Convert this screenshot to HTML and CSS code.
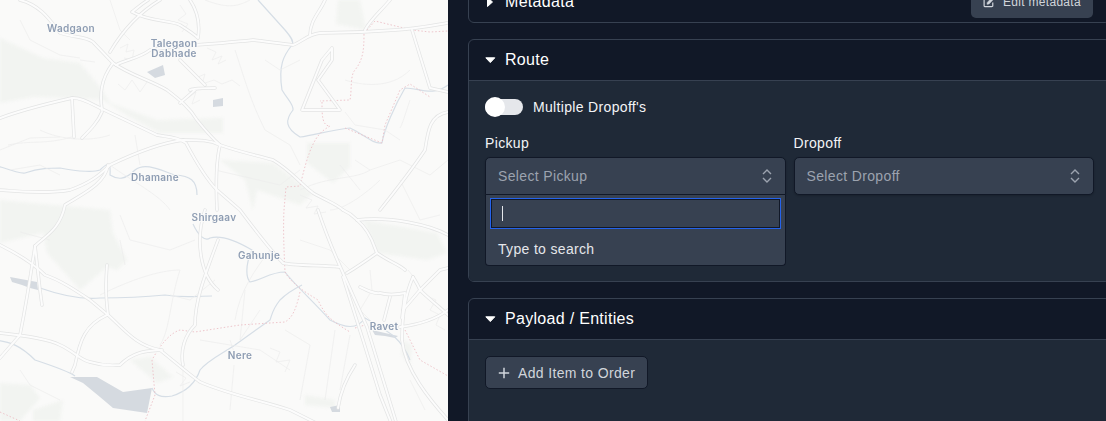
FILE: index.html
```html
<!DOCTYPE html>
<html lang="en">
<head>
<meta charset="utf-8">
<title>New Order</title>
<link rel="stylesheet" href="styles.css">
</head>
<body>
<div class="app">
  <div class="map">
    <svg class="map-svg" viewBox="0 0 448 421" width="448" height="421" aria-hidden="true">
      <defs>
        <g id="majors">
          <path d="M-5 120C20 110 50 103 72 98 80 97 90 103 100 108L157 135C168 137 178 137 186 143 195 160 205 178 217 190L240 210C255 230 270 250 283 263 295 266 320 265 340 267"/>
          <path d="M20 0C40 5 50 20 60 33 75 38 85 36 93 42L113 63C130 75 150 80 167 90 180 100 190 108 197 120 205 130 212 138 220 145 240 152 255 155 273 160 290 170 300 183 313 193 325 200 335 203 343 210"/>
          <path d="M318 210C328 240 335 255 343 273L367 327 397 425"/>
          <path d="M343 277L363 340 380 395 392 425"/>
          <path d="M116 65C125 60 140 58 150 50 180 45 220 44 253 40 270 42 282 44 293 45 302 42 308 34 320 33 340 33 370 32 395 30 415 29 430 26 447 23"/>
          <path d="M113 63C100 80 100 95 102 110"/>
          <path d="M110 52C120 35 135 15 160 0"/>
          <path d="M72 98L74 137M102 112C98 122 90 130 82 138"/>
          <path d="M220 145C215 165 216 190 217 210"/>
          <path d="M183 140C160 143 135 153 110 165 100 175 90 183 70 190 40 195 10 190 -5 190"/>
          <path d="M183 140C200 140 210 140 220 145"/>
          <path d="M108 165C105 185 80 195 65 205 60 230 45 236 35 246L40 290 42 305"/>
          <path d="M0 245C20 255 35 265 45 275 60 280 75 290 90 300L108 315C125 330 135 345 160 350 175 362 190 375 200 382 230 395 260 400 290 410L320 425"/>
          <path d="M107 315C85 325 80 340 75 365L72 372M108 315C105 290 106 280 107 265"/>
          <path d="M0 333C30 336 50 340 60 345 75 352 80 360 90 362 100 365 110 366 120 365 135 350 150 351 162 350"/>
          <path d="M35 246C30 280 25 310 20 335L0 358"/>
          <path d="M218 240C205 275 195 300 195 325 185 335 180 350 183 365"/>
          <path d="M205 210C195 240 200 275 218 290"/>
          <path d="M343 210C352 214 355 218 357 220 372 232 375 250 377 253 360 265 352 270 347 273"/>
          <path d="M357 220C390 216 430 225 448 235"/>
          <path d="M377 253C390 262 400 265 405 270"/>
          <path d="M360 287C370 292 375 294 380 293 390 296 400 294 405 293M390 297L384 320M405 293L402 318"/>
          <path d="M413 277C405 295 402 320 402 340 405 370 430 400 448 420"/>
          <path d="M413 277C418 285 420 290 420 290 430 300 440 307 448 315M403 310L420 290 440 270 448 268M400 327C415 325 435 320 448 310"/>
          <path d="M325 0C320 12 310 20 310 35M390 0C380 12 370 20 365 30M412 30L430 88 448 92"/>
          <path d="M332 48L322 60 302 110 340 110 318 80 332 60M332 60L332 48"/>
          <path d="M448 112C430 115 428 130 425 150 415 165 400 185 380 210"/>
          <path d="M148 0C140 5 135 10 132 12 150 22 170 20 180 25 188 30 195 35 198 38 200 25 198 12 190 0"/>
          <path d="M180 60L205 85M190 90C195 88 205 88 215 88M195 90L180 103"/>
          <path d="M355 365C345 380 340 395 338 408"/>
        </g>
        <g id="minors">
          <path d="M20 20L30 40 60 55 80 58M80 60L95 62M40 130C60 140 90 142 110 135M8 145C30 140 45 145 72 137"/>
          <path d="M135 135L140 165M110 165C130 180 160 195 170 210M215 170L280 185 300 170"/>
          <path d="M130 40L120 30 110 0M205 0C230 10 240 5 250 0M235 50C245 80 250 100 265 130L290 145 300 165"/>
          <path d="M265 60L280 70 300 60M345 80C360 85 390 90 410 70M345 112L355 125 385 130 400 140"/>
          <path d="M410 100C405 115 402 125 400 128M355 160L370 170 400 160 430 175 448 160"/>
          <path d="M300 190C330 175 355 180 370 170M340 165L360 190M380 180C370 190 345 210 330 210"/>
          <path d="M100 295C130 280 160 270 180 270 170 300 170 330 160 345M170 295L190 300 215 280"/>
          <path d="M245 290L240 340M200 340L260 350 290 370M285 330L310 345 300 400M335 330L325 400 M350 335L340 390"/>
          <path d="M183 370L183 421M234 365L230 410M260 310L240 340M60 400L30 385 20 370"/>
          <path d="M230 340L235 355M20 232L50 240M120 215L130 240 170 250 195 240M120 240L125 265"/>
          <path d="M270 250C255 270 240 290 235 320M300 240L330 250 350 270"/>
          <path d="M370 270L372 290 360 310 380 330M400 180L410 200 420 220 440 215M410 380L425 410"/>
          <path d="M0 150L30 138 60 137M10 170L40 165 60 175"/>
          <path d="M120 48L128 44 126 52 134 50 132 60 124 58M180 5L186 14 178 20 188 24 182 32M207 48L216 52 212 60 222 56 218 64 226 60M196 78L205 74 202 84 214 80 222 84 232 80 240 86"/>
          <path d="M118 84L125 90 132 80 140 92 147 82M188 98L196 92 192 104 200 100M408 270L416 280M425 295L436 300 430 310 440 315 436 325 445 330M270 348L280 352 276 362 290 360 285 372"/>
          <path d="M300 195L312 200 306 208 318 206 314 214 326 212M176 372L186 378 180 386 190 382"/>
        </g>
        <g id="rivers">
          <path d="M258 0L285 30C292 38 294 42 292 45 284 55 278 65 282 90 288 100 294 105 293 110 285 120 285 128 300 137 315 135 330 130 350 128 365 135 372 144 382 143 384 130 395 105 405 88 420 88 432 97 448 85"/>
          <path d="M-5 165C10 170 20 174 25 173 40 168 50 168 60 168 80 172 95 172 100 170 108 162 111 162 110 175 118 180 125 180 135 170 145 162 160 170 175 175 190 176 197 180 197 195"/>
          <path d="M193 224C198 235 205 242 210 238 220 235 235 240 252 250 245 265 246 278 250 282 262 280 270 272 285 272 295 285 312 300 330 320 345 328 357 330 365 318 385 330 400 335 410 360 448 380"/>
          <path d="M40 288C60 295 80 300 100 298 125 298 145 297 165 295 185 298 195 296 212 296"/>
          <path d="M-5 340C10 342 20 345 35 360 50 365 70 372 75 376"/>
          <path d="M152 388C155 395 160 398 172 396 185 392 195 385 200 370 208 360 220 355 235 345L270 320C272 315 272 310 280 300 285 295 292 290 302 285"/>
        </g>
        <g id="borders">
          <path d="M367 30L375 21 412 30 430 32 448 31"/>
          <path d="M364 34C364 50 363 60 355 70 350 75 352 90 350 100L320 101M322 102C322 115 322 126 330 126 320 132 312 137 302 178L300 186 286 187 284 210C283 230 284 250 285 272 292 285 310 295 318 300 325 315 330 320 350 332"/>
          <path d="M300 292C296 310 292 318 285 322L240 325 195 332 180 330C170 333 160 345 152 360L155 395 145 421"/>
          <path d="M355 328L365 325M405 330L420 360 448 376M0 412L20 421"/>
          <path d="M345 128L382 143 385 125 400 90 410 84 430 97"/>
        </g>
      </defs>
      <rect class="land" width="448" height="421"/>
      <g class="blur-soft">
        <path class="green" d="M0 38L43 58 80 63 100 87 110 103 157 120 223 118 223 133 160 133 130 117 103 100 70 98 33 97 0 103Z"/>
        <path class="green" d="M338 0L360 0 366 30 336 24Z"/>
        <path class="green" d="M220 160L273 163 313 193 300 205 257 190 253 210 245 180Z"/>
        <path class="green" d="M307 143L350 143 350 167 333 183 307 163Z"/>
        <path class="green" d="M0 243L43 233 47 253 80 290 107 267 117 270 127 260 113 233 110 210 0 200Z"/>
        <path class="green" d="M0 383L30 385 40 398 20 421 0 421Z"/>
        <path class="green" d="M33 410L63 400 60 421 33 421Z"/>
        <path class="green" d="M130 360L150 357 173 377 157 383Z"/>
        <path class="green" d="M363 220L437 233 447 253 427 260 377 253Z"/>
        <path class="green" d="M403 340L412 345 410 365 402 355Z"/>
        <path class="green" d="M305 395L335 400 335 408 305 405Z"/>
      </g>
      <g class="blur-fine">
        <path class="water" d="M147 72L163 65 165 75 155 78Z"/>
        <path class="water" d="M213 100L223 98 223 106 213 107Z"/>
        <path class="water" d="M10 277L37 282 38 290 30 288 22 285 12 282Z"/>
        <path class="water" d="M70 377L97 377 123 392 152 388 147 413 113 408 100 397 83 383Z"/>
        <path class="water" d="M330 407L340 405 340 412 332 412Z"/>
        <path class="water" d="M372 330L398 336 395 338 385 336 375 335Z"/>
        <use href="#rivers" class="river"/>
        <use href="#minors" class="minor"/>
        <use href="#borders" class="border"/>
        <use href="#majors" class="road-casing"/>
        <use href="#majors" class="road-fill"/>
      </g>
      <g class="blur-label">
        <text class="place" x="71" y="32">Wadgaon</text>
        <text class="place" x="174" y="47">Talegaon</text>
        <text class="place" x="174" y="57">Dabhade</text>
        <text class="place" x="155" y="181">Dhamane</text>
        <text class="place" x="214" y="221">Shirgaav</text>
        <text class="place" x="259" y="259">Gahunje</text>
        <text class="place" x="384" y="330">Ravet</text>
        <text class="place" x="240" y="359">Nere</text>
      </g>
    </svg>
  </div>
  <main class="panel">
    <section class="card card-clipped">
      <header class="card-head">
        <svg class="caret" viewBox="0 0 12 12" width="12" height="12"><path d="M2.5 1.5L7.5 6 2.5 10.5Z"/></svg>
        <h2 class="card-title">Metadata</h2>
        <button class="edit-btn" type="button">
          <svg class="edit-icon" viewBox="0 0 14 14" width="12" height="12"><path d="M6.5 2.5H2.5A1.2 1.2 0 0 0 1.3 3.7V11.3A1.2 1.2 0 0 0 2.5 12.5H10.2A1.2 1.2 0 0 0 11.4 11.3V7.5"/><path class="edit-pen" d="M5 7.5L10.6 1.6 12.6 3.5 7 9.3 4.7 9.7Z"/></svg>
          Edit metadata
        </button>
      </header>
    </section>
    <section class="card">
      <header class="card-head card-head-open">
        <svg class="caret" viewBox="0 0 12 12" width="12" height="12"><path d="M.8 3.8H9.8L5.3 8.6Z"/></svg>
        <h2 class="card-title">Route</h2>
      </header>
      <div class="card-body">
        <div class="toggle-row">
          <span class="toggle"><span class="toggle-knob"></span></span>
          <span class="toggle-label">Multiple Dropoff's</span>
        </div>
        <div class="field-grid">
          <div class="field">
            <label class="field-label">Pickup</label>
            <div class="select select-open">
              <span class="select-text">Select Pickup</span>
              <svg class="chevrons" viewBox="0 0 12 16" width="12" height="16"><path d="M2 6L6 2 10 6M2 10L6 14 10 10"/></svg>
            </div>
            <div class="dropdown">
              <div class="search"><span class="search-caret"></span></div>
              <div class="dropdown-hint">Type to search</div>
            </div>
          </div>
          <div class="field">
            <label class="field-label">Dropoff</label>
            <div class="select">
              <span class="select-text">Select Dropoff</span>
              <svg class="chevrons" viewBox="0 0 12 16" width="12" height="16"><path d="M2 6L6 2 10 6M2 10L6 14 10 10"/></svg>
            </div>
          </div>
        </div>
      </div>
    </section>
    <section class="card">
      <header class="card-head card-head-open">
        <svg class="caret" viewBox="0 0 12 12" width="12" height="12"><path d="M.8 3.8H9.8L5.3 8.6Z"/></svg>
        <h2 class="card-title">Payload / Entities</h2>
      </header>
      <div class="card-body card-body-tall">
        <button class="add-btn" type="button">
          <svg class="plus" viewBox="0 0 12 12" width="12" height="12"><path d="M6 .8V11.2M.8 6H11.2"/></svg>
          Add Item to Order
        </button>
      </div>
    </section>
  </main>
</div>
</body>
</html>
```
FILE: styles.css
```css
* { box-sizing: border-box; }
html, body { margin: 0; height: 100%; overflow: hidden; }
body { background: #111827; font-family: "Liberation Sans", Arial, sans-serif; }
.app { display: flex; height: 421px; width: 1106px; overflow: hidden; }

.map { flex: 0 0 448px; height: 421px; background: #fafaf9; overflow: hidden; }
.map-svg { display: block; }
.land { fill: #fafaf9; }
.blur-soft { filter: blur(1.5px); }
.blur-fine { filter: blur(.45px); }
.blur-label { filter: blur(.25px); }
.green { fill: #f2f4f1; }
.water { fill: #d5dae0; }
.river { fill: none; stroke: #d6dee6; stroke-width: 1.2; stroke-linejoin: round; }
.minor { fill: none; stroke: #ededed; stroke-width: .7; }
.border { fill: none; stroke: #ecc0c6; stroke-width: .9; stroke-dasharray: 1.5 2; }
.road-casing { fill: none; stroke: #e3e4e4; stroke-width: 3.4; stroke-linejoin: round; stroke-linecap: round; }
.road-fill { fill: none; stroke: #fcfcfc; stroke-width: 2; stroke-linejoin: round; stroke-linecap: round; }
.place { fill: #8e9db3; font-family: Inter, "Liberation Sans", sans-serif; font-size: 10px; font-weight: 600; letter-spacing: .3px; text-anchor: middle; stroke: #fafaf9; stroke-width: 2px; paint-order: stroke; }

.panel { flex: 0 0 658px; height: 421px; padding-left: 20px; background: #111827; overflow: hidden; }
.card { margin: 0 -5px 16px 0; border: 1px solid #374151; border-radius: 6px; background: #111827; overflow: hidden; }
.card-clipped { margin-top: -20px; }
.card-head { display: flex; align-items: center; gap: 8px; height: 41px; padding: 0 16px; color: #fff; }
.card-head-open { border-bottom: 1px solid #374151; }
.caret { flex: none; fill: #fff; stroke: #fff; stroke-width: 1; stroke-linejoin: round; }
.card-title { margin: 0; font-size: 16px; font-weight: 400; letter-spacing: .3px; color: #fff; }

.edit-btn { display: flex; align-items: center; gap: 8px; margin-left: auto; margin-right: 1px; width: 122px; height: 32px; padding: 0 12px; border: 0; border-radius: 5px; background: #374151; color: #d1d5db; font: 12px "Liberation Sans", Arial, sans-serif; letter-spacing: .3px; white-space: nowrap; }
.edit-icon { flex: none; fill: none; stroke: #d1d5db; stroke-width: 1.4; }
.edit-pen { fill: #d1d5db; stroke-width: .6; }

.card-body { padding: 16px 16px 15px; background: #1f2937; }
.card-body-tall { height: 120px; }
.toggle-row { display: flex; align-items: center; gap: 10px; height: 20px; margin-bottom: 17px; }
.toggle { position: relative; display: block; width: 38px; height: 16px; border-radius: 8px; background: #e5e7eb; }
.toggle-knob { position: absolute; left: 0; top: -2px; width: 20px; height: 20px; border-radius: 50%; background: #fff; }
.toggle-label { font-size: 14px; letter-spacing: .33px; color: #f3f4f6; }

.field-grid { display: grid; grid-template-columns: 1fr 1fr; gap: 8px; }
.field-label { display: block; margin-bottom: 5px; font-size: 14px; line-height: 18px; letter-spacing: .35px; color: #f3f4f6; }
.select { display: flex; align-items: center; justify-content: space-between; height: 38px; padding: 0 12px; border: 1px solid #111827; border-radius: 5px; background: #374151; box-shadow: 0 1px 2px rgba(0,0,0,.2); }
.select-open { border-radius: 5px 5px 0 0; }
.select-text { font-size: 14px; letter-spacing: .35px; color: #9ca3af; }
.chevrons { flex: none; fill: none; stroke: #9ca3af; stroke-width: 1.4; }
.dropdown { height: 71px; padding: 3px 4px 0; border: 1px solid #111827; border-top: 0; border-radius: 0 0 4px 4px; background: #374151; }
.search { display: flex; align-items: center; height: 31px; padding-left: 11px; border: 1px solid #2563eb; box-shadow: inset 0 0 0 1px #111827; background: #374151; }
.search-caret { display: block; width: 1px; height: 15px; background: #e5e7eb; }
.dropdown-hint { margin-top: 12px; padding-left: 8px; font-size: 14px; letter-spacing: .33px; color: #e5e7eb; }

.add-btn { display: inline-flex; align-items: center; gap: 8px; height: 33px; padding: 0 12px; border: 1px solid #111827; border-radius: 5px; background: #374151; color: #d1d5db; font: 14px "Liberation Sans", Arial, sans-serif; letter-spacing: .35px; }
.plus { fill: none; stroke: #d1d5db; stroke-width: 1.5; }
```
